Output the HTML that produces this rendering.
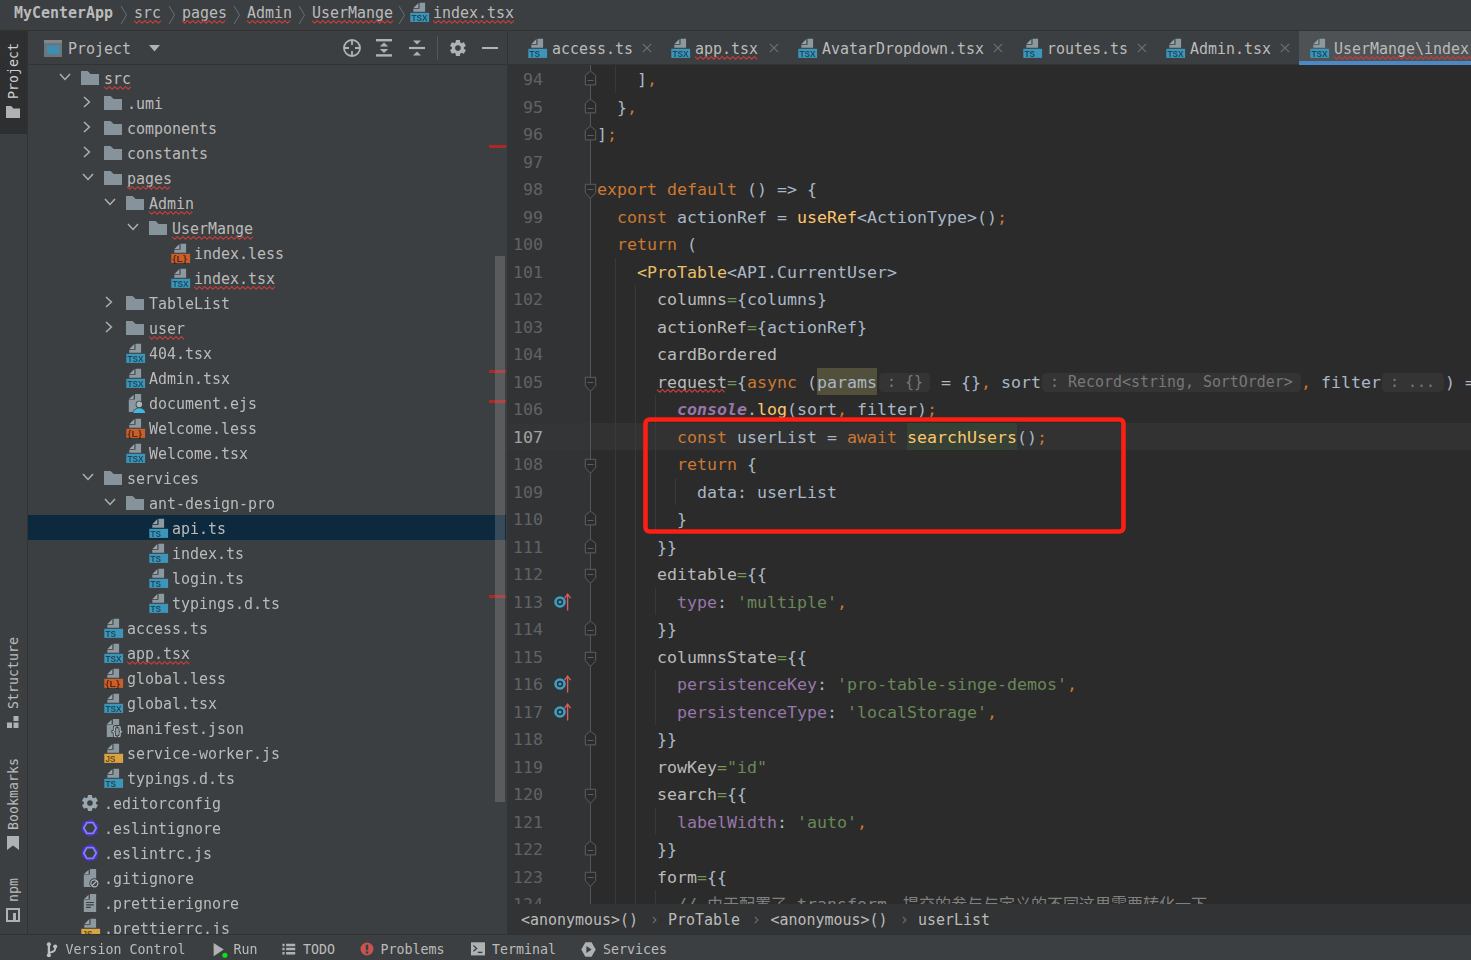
<!DOCTYPE html>
<html><head><meta charset="utf-8"><title>index.tsx</title>
<style>
html,body{margin:0;padding:0}
body{width:1471px;height:960px;overflow:hidden;background:#3c3f41;position:relative;font-family:"DejaVu Sans Mono","Liberation Mono","Noto Sans CJK SC",monospace;color:#bbb}
span,.a,div{position:absolute}
span{white-space:pre}
svg{display:block;overflow:visible}
.k{color:#cc7832}.f{color:#ffc66d}.p{color:#9876aa}.s{color:#6a8759}.t{color:#e8bf6a}.at{color:#bababa}.eq{color:#739558}.c{color:#808080}
.ci{color:#9876aa;font-style:italic;font-weight:bold}
.ln{color:#606366}
.z{font-size:16px}
i,b,u,em{position:static;font-style:normal;font-weight:normal;text-decoration:none}
</style></head><body>

<div style="left:0;top:0;width:1471px;height:30px;background:#3c3f41"></div>
<div style="left:0;top:30px;width:1471px;height:1px;background:#323232"></div>
<span style="left:14px;top:4px;font-size:14.95px;line-height:19px;color:#bbbbbb;transform:scaleY(1.09);transform-origin:0 14px;font-weight:bold">MyCenterApp</span>
<span style="left:134px;top:4px;font-size:14.95px;line-height:19px;color:#bbbbbb;transform:scaleY(1.09);transform-origin:0 14px;">src</span>
<svg class="a" style="left:134px;top:20.0px" width="28" height="4" viewBox="0 0 28 4"><polyline points="0.0,0.6 2.7,3.2 5.4,0.6 8.1,3.2 10.8,0.6 13.5,3.2 16.2,0.6 18.9,3.2 21.6,0.6 24.3,3.2 27.0,0.6" fill="none" stroke="#bc3f3c" stroke-width="1.25"/></svg>
<span style="left:182px;top:4px;font-size:14.95px;line-height:19px;color:#bbbbbb;transform:scaleY(1.09);transform-origin:0 14px;">pages</span>
<svg class="a" style="left:182px;top:20.0px" width="46" height="4" viewBox="0 0 46 4"><polyline points="0.0,0.6 2.7,3.2 5.4,0.6 8.1,3.2 10.8,0.6 13.5,3.2 16.2,0.6 18.9,3.2 21.6,0.6 24.3,3.2 27.0,0.6 29.7,3.2 32.4,0.6 35.1,3.2 37.8,0.6 40.5,3.2 43.2,0.6" fill="none" stroke="#bc3f3c" stroke-width="1.25"/></svg>
<span style="left:247px;top:4px;font-size:14.95px;line-height:19px;color:#bbbbbb;transform:scaleY(1.09);transform-origin:0 14px;">Admin</span>
<svg class="a" style="left:247px;top:20.0px" width="46" height="4" viewBox="0 0 46 4"><polyline points="0.0,0.6 2.7,3.2 5.4,0.6 8.1,3.2 10.8,0.6 13.5,3.2 16.2,0.6 18.9,3.2 21.6,0.6 24.3,3.2 27.0,0.6 29.7,3.2 32.4,0.6 35.1,3.2 37.8,0.6 40.5,3.2 43.2,0.6" fill="none" stroke="#bc3f3c" stroke-width="1.25"/></svg>
<span style="left:312px;top:4px;font-size:14.95px;line-height:19px;color:#bbbbbb;transform:scaleY(1.09);transform-origin:0 14px;">UserMange</span>
<svg class="a" style="left:312px;top:20.0px" width="82" height="4" viewBox="0 0 82 4"><polyline points="0.0,0.6 2.7,3.2 5.4,0.6 8.1,3.2 10.8,0.6 13.5,3.2 16.2,0.6 18.9,3.2 21.6,0.6 24.3,3.2 27.0,0.6 29.7,3.2 32.4,0.6 35.1,3.2 37.8,0.6 40.5,3.2 43.2,0.6 45.9,3.2 48.6,0.6 51.3,3.2 54.0,0.6 56.7,3.2 59.4,0.6 62.1,3.2 64.8,0.6 67.5,3.2 70.2,0.6 72.9,3.2 75.6,0.6 78.3,3.2 81.0,0.6" fill="none" stroke="#bc3f3c" stroke-width="1.25"/></svg>
<span style="left:433px;top:4px;font-size:14.95px;line-height:19px;color:#bbbbbb;transform:scaleY(1.09);transform-origin:0 14px;">index.tsx</span>
<svg class="a" style="left:433px;top:20.0px" width="82" height="4" viewBox="0 0 82 4"><polyline points="0.0,0.6 2.7,3.2 5.4,0.6 8.1,3.2 10.8,0.6 13.5,3.2 16.2,0.6 18.9,3.2 21.6,0.6 24.3,3.2 27.0,0.6 29.7,3.2 32.4,0.6 35.1,3.2 37.8,0.6 40.5,3.2 43.2,0.6 45.9,3.2 48.6,0.6 51.3,3.2 54.0,0.6 56.7,3.2 59.4,0.6 62.1,3.2 64.8,0.6 67.5,3.2 70.2,0.6 72.9,3.2 75.6,0.6 78.3,3.2 81.0,0.6" fill="none" stroke="#bc3f3c" stroke-width="1.25"/></svg>
<svg class="a" style="left:119.5px;top:5px" width="8" height="20" viewBox="0 0 8 20"><path d="M1 1L6.5 10L1 19" fill="none" stroke="#6b6e70" stroke-width="1"/></svg>
<svg class="a" style="left:167.5px;top:5px" width="8" height="20" viewBox="0 0 8 20"><path d="M1 1L6.5 10L1 19" fill="none" stroke="#6b6e70" stroke-width="1"/></svg>
<svg class="a" style="left:232.5px;top:5px" width="8" height="20" viewBox="0 0 8 20"><path d="M1 1L6.5 10L1 19" fill="none" stroke="#6b6e70" stroke-width="1"/></svg>
<svg class="a" style="left:297.5px;top:5px" width="8" height="20" viewBox="0 0 8 20"><path d="M1 1L6.5 10L1 19" fill="none" stroke="#6b6e70" stroke-width="1"/></svg>
<svg class="a" style="left:397.5px;top:5px" width="8" height="20" viewBox="0 0 8 20"><path d="M1 1L6.5 10L1 19" fill="none" stroke="#6b6e70" stroke-width="1"/></svg>
<svg class="a" style="left:409.5px;top:2.1px;will-change:transform" width="20" height="20" viewBox="0 0 20 20"><path d="M9.5 0.7H15.1V9.8H3.3V6.8H9.5Z" fill="#8d99a1"/><path d="M8.4 1.1V5.9H3.5Z" fill="#97a3ab"/><rect x="0.3" y="10.8" width="18.8" height="9.1" fill="#3d96b9"/><text x="1.5" y="18.75" font-family='"Liberation Sans","DejaVu Sans",sans-serif' font-weight="700" font-size="9.8" fill="#0b2a36" fill-opacity=".72" textLength="16.1" lengthAdjust="spacingAndGlyphs">TSX</text></svg>
<div style="left:0;top:31px;width:27px;height:103px;background:#2d2f30"></div>
<div style="left:27px;top:31px;width:1px;height:904px;background:#323232"></div>
<span style="left:4.5px;top:99px;font-size:13.29px;line-height:18px;color:#d0d0d0;transform-origin:0 0;transform:rotate(-90deg);width:56px">Project</span>
<svg class="a" style="left:6px;top:106px" width="14" height="12" viewBox="0 0 14 12"><path d="M0 0H5.2L7.4 2.6H14V12H0Z" fill="#afb1b3"/></svg>
<span style="left:4.5px;top:709px;font-size:13.29px;line-height:18px;color:#bbbbbb;transform-origin:0 0;transform:rotate(-90deg);width:72px">Structure</span>
<svg class="a" style="left:7px;top:716px" width="12" height="12" viewBox="0 0 12 12"><rect x="6.5" y="0" width="5" height="5" fill="#afb1b3"/><rect x="0" y="6.5" width="5" height="5.5" fill="#afb1b3"/><rect x="6.5" y="6.5" width="5" height="5.5" fill="#afb1b3"/></svg>
<span style="left:4.5px;top:830px;font-size:13.29px;line-height:18px;color:#bbbbbb;transform-origin:0 0;transform:rotate(-90deg);width:72px">Bookmarks</span>
<svg class="a" style="left:7px;top:836px" width="12" height="14" viewBox="0 0 12 14"><path d="M0 0H12V14L6 9.5L0 14Z" fill="#afb1b3"/></svg>
<span style="left:4.5px;top:902px;font-size:13.29px;line-height:18px;color:#bbbbbb;transform-origin:0 0;transform:rotate(-90deg);width:24px">npm</span>
<svg class="a" style="left:6px;top:907.5px" width="14" height="14" viewBox="0 0 14 14"><path d="M0 0H14V14H0Z M2 2V12H7V5H10V12H12V2Z" fill="#afb1b3" fill-rule="evenodd"/></svg>
<div style="left:28px;top:64px;width:478px;height:1px;background:#323232"></div>
<svg class="a" style="left:44px;top:40px" width="18" height="17" viewBox="0 0 18 17"><rect x="0" y="0" width="18" height="17" fill="#6d747a"/><rect x="0" y="0" width="18" height="3" fill="#7f868c"/><rect x="3" y="5.5" width="12.5" height="8.5" fill="#3d8fb2"/></svg>
<span style="left:68px;top:40px;font-size:14.95px;line-height:19px;color:#bbbbbb;transform:scaleY(1.09);transform-origin:0 14px;">Project</span>
<svg class="a" style="left:149px;top:45px" width="11" height="7" viewBox="0 0 11 7"><path d="M0 0H11L5.5 6.5Z" fill="#afb1b3"/></svg>
<svg class="a" style="left:342px;top:38px" width="20" height="20" viewBox="0 0 20 20"><circle cx="10" cy="10" r="8" fill="none" stroke="#afb1b3" stroke-width="1.8"/><path d="M10 2V7M10 13V18M2 10H7M13 10H18" stroke="#afb1b3" stroke-width="1.8"/></svg>
<svg class="a" style="left:376px;top:39px" width="16" height="18" viewBox="0 0 16 18"><rect x="0" y="0" width="16" height="2.4" fill="#afb1b3"/><rect x="0" y="15.2" width="16" height="2.4" fill="#afb1b3"/><path d="M8 3.6L12.2 7.6H3.8Z M8 14L12.2 10H3.8Z" fill="#afb1b3"/></svg>
<svg class="a" style="left:409px;top:40px" width="16" height="16" viewBox="0 0 16 16"><rect x="0" y="6.9" width="16" height="2.2" fill="#afb1b3"/><path d="M8 4.6L12 0.6H4Z M8 11.4L12 15.6H4Z" fill="#afb1b3"/></svg>
<div style="left:437px;top:36px;width:1px;height:24px;background:#5a5550"></div>
<svg class="a" style="left:449px;top:39px" width="17" height="17" viewBox="0 0 20 20"><g transform="translate(0.5 0.6)"><path d="M7 4.6L7.7 0.6H12.3L13 4.6Z" transform="rotate(0 10 10)" fill="#afb1b3"/><path d="M7 4.6L7.7 0.6H12.3L13 4.6Z" transform="rotate(60 10 10)" fill="#afb1b3"/><path d="M7 4.6L7.7 0.6H12.3L13 4.6Z" transform="rotate(120 10 10)" fill="#afb1b3"/><path d="M7 4.6L7.7 0.6H12.3L13 4.6Z" transform="rotate(180 10 10)" fill="#afb1b3"/><path d="M7 4.6L7.7 0.6H12.3L13 4.6Z" transform="rotate(240 10 10)" fill="#afb1b3"/><path d="M7 4.6L7.7 0.6H12.3L13 4.6Z" transform="rotate(300 10 10)" fill="#afb1b3"/><circle cx="10" cy="10" r="7.1" fill="#afb1b3"/><circle cx="10" cy="10" r="3.3" fill="#3c3f41"/></g></svg>
<div style="left:482px;top:46.5px;width:16px;height:2.5px;background:#afb1b3"></div>
<div style="left:28px;top:65px;width:478px;height:869px;overflow:hidden">
<svg class="a" style="left:52.8px;top:5.5px" width="18" height="14" viewBox="0 0 18 14"><path d="M0 0H6.6L9.6 3H18V14H0Z" fill="#87939a"/></svg>
<svg class="a" style="left:30.6px;top:8.2px" width="12" height="8" viewBox="0 0 12 8"><path d="M1 1L6 6.4L11 1" fill="none" stroke="#adb0b3" stroke-width="1.5"/></svg>
<span style="left:76px;top:5px;font-size:14.95px;line-height:19px;color:#bbbbbb;transform:scaleY(1.09);transform-origin:0 14px;">src</span>
<svg class="a" style="left:76px;top:20.5px" width="28" height="4" viewBox="0 0 28 4"><polyline points="0.0,0.6 2.7,3.2 5.4,0.6 8.1,3.2 10.8,0.6 13.5,3.2 16.2,0.6 18.9,3.2 21.6,0.6 24.3,3.2 27.0,0.6" fill="none" stroke="#bc3f3c" stroke-width="1.25"/></svg>
<svg class="a" style="left:75.8px;top:30.5px" width="18" height="14" viewBox="0 0 18 14"><path d="M0 0H6.6L9.6 3H18V14H0Z" fill="#87939a"/></svg>
<svg class="a" style="left:55.2px;top:31.2px" width="8" height="12" viewBox="0 0 8 12"><path d="M1 1L6.4 6L1 11" fill="none" stroke="#adb0b3" stroke-width="1.5"/></svg>
<span style="left:99px;top:30px;font-size:14.95px;line-height:19px;color:#bbbbbb;transform:scaleY(1.09);transform-origin:0 14px;">.umi</span>
<svg class="a" style="left:75.8px;top:55.5px" width="18" height="14" viewBox="0 0 18 14"><path d="M0 0H6.6L9.6 3H18V14H0Z" fill="#87939a"/></svg>
<svg class="a" style="left:55.2px;top:56.2px" width="8" height="12" viewBox="0 0 8 12"><path d="M1 1L6.4 6L1 11" fill="none" stroke="#adb0b3" stroke-width="1.5"/></svg>
<span style="left:99px;top:55px;font-size:14.95px;line-height:19px;color:#bbbbbb;transform:scaleY(1.09);transform-origin:0 14px;">components</span>
<svg class="a" style="left:75.8px;top:80.5px" width="18" height="14" viewBox="0 0 18 14"><path d="M0 0H6.6L9.6 3H18V14H0Z" fill="#87939a"/></svg>
<svg class="a" style="left:55.2px;top:81.2px" width="8" height="12" viewBox="0 0 8 12"><path d="M1 1L6.4 6L1 11" fill="none" stroke="#adb0b3" stroke-width="1.5"/></svg>
<span style="left:99px;top:80px;font-size:14.95px;line-height:19px;color:#bbbbbb;transform:scaleY(1.09);transform-origin:0 14px;">constants</span>
<svg class="a" style="left:75.8px;top:105.5px" width="18" height="14" viewBox="0 0 18 14"><path d="M0 0H6.6L9.6 3H18V14H0Z" fill="#87939a"/></svg>
<svg class="a" style="left:53.6px;top:108.2px" width="12" height="8" viewBox="0 0 12 8"><path d="M1 1L6 6.4L11 1" fill="none" stroke="#adb0b3" stroke-width="1.5"/></svg>
<span style="left:99px;top:105px;font-size:14.95px;line-height:19px;color:#bbbbbb;transform:scaleY(1.09);transform-origin:0 14px;">pages</span>
<svg class="a" style="left:99px;top:120.5px" width="46" height="4" viewBox="0 0 46 4"><polyline points="0.0,0.6 2.7,3.2 5.4,0.6 8.1,3.2 10.8,0.6 13.5,3.2 16.2,0.6 18.9,3.2 21.6,0.6 24.3,3.2 27.0,0.6 29.7,3.2 32.4,0.6 35.1,3.2 37.8,0.6 40.5,3.2 43.2,0.6" fill="none" stroke="#bc3f3c" stroke-width="1.25"/></svg>
<svg class="a" style="left:97.8px;top:130.5px" width="18" height="14" viewBox="0 0 18 14"><path d="M0 0H6.6L9.6 3H18V14H0Z" fill="#87939a"/></svg>
<svg class="a" style="left:75.6px;top:133.2px" width="12" height="8" viewBox="0 0 12 8"><path d="M1 1L6 6.4L11 1" fill="none" stroke="#adb0b3" stroke-width="1.5"/></svg>
<span style="left:121px;top:130px;font-size:14.95px;line-height:19px;color:#bbbbbb;transform:scaleY(1.09);transform-origin:0 14px;">Admin</span>
<svg class="a" style="left:121px;top:145.5px" width="46" height="4" viewBox="0 0 46 4"><polyline points="0.0,0.6 2.7,3.2 5.4,0.6 8.1,3.2 10.8,0.6 13.5,3.2 16.2,0.6 18.9,3.2 21.6,0.6 24.3,3.2 27.0,0.6 29.7,3.2 32.4,0.6 35.1,3.2 37.8,0.6 40.5,3.2 43.2,0.6" fill="none" stroke="#bc3f3c" stroke-width="1.25"/></svg>
<svg class="a" style="left:120.8px;top:155.5px" width="18" height="14" viewBox="0 0 18 14"><path d="M0 0H6.6L9.6 3H18V14H0Z" fill="#87939a"/></svg>
<svg class="a" style="left:98.6px;top:158.2px" width="12" height="8" viewBox="0 0 12 8"><path d="M1 1L6 6.4L11 1" fill="none" stroke="#adb0b3" stroke-width="1.5"/></svg>
<span style="left:144px;top:155px;font-size:14.95px;line-height:19px;color:#bbbbbb;transform:scaleY(1.09);transform-origin:0 14px;">UserMange</span>
<svg class="a" style="left:144px;top:170.5px" width="82" height="4" viewBox="0 0 82 4"><polyline points="0.0,0.6 2.7,3.2 5.4,0.6 8.1,3.2 10.8,0.6 13.5,3.2 16.2,0.6 18.9,3.2 21.6,0.6 24.3,3.2 27.0,0.6 29.7,3.2 32.4,0.6 35.1,3.2 37.8,0.6 40.5,3.2 43.2,0.6 45.9,3.2 48.6,0.6 51.3,3.2 54.0,0.6 56.7,3.2 59.4,0.6 62.1,3.2 64.8,0.6 67.5,3.2 70.2,0.6 72.9,3.2 75.6,0.6 78.3,3.2 81.0,0.6" fill="none" stroke="#bc3f3c" stroke-width="1.25"/></svg>
<svg class="a" style="left:142.6px;top:178px;will-change:transform" width="20" height="20" viewBox="0 0 20 20"><path d="M9.5 0.7H15.1V9.8H3.3V6.8H9.5Z" fill="#8d99a1"/><path d="M8.4 1.1V5.9H3.5Z" fill="#97a3ab"/><rect x="0.3" y="10.8" width="18.8" height="9.1" fill="#c8602b"/><text x="1.5" y="18.75" font-family='"Liberation Sans","DejaVu Sans",sans-serif' font-weight="700" font-size="9.4" fill="#3a1204" fill-opacity=".72" textLength="14.5" lengthAdjust="spacingAndGlyphs">{L}</text></svg>
<span style="left:166px;top:180px;font-size:14.95px;line-height:19px;color:#bbbbbb;transform:scaleY(1.09);transform-origin:0 14px;">index.less</span>
<svg class="a" style="left:142.6px;top:203px;will-change:transform" width="20" height="20" viewBox="0 0 20 20"><path d="M9.5 0.7H15.1V9.8H3.3V6.8H9.5Z" fill="#8d99a1"/><path d="M8.4 1.1V5.9H3.5Z" fill="#97a3ab"/><rect x="0.3" y="10.8" width="18.8" height="9.1" fill="#3d96b9"/><text x="1.5" y="18.75" font-family='"Liberation Sans","DejaVu Sans",sans-serif' font-weight="700" font-size="9.8" fill="#0b2a36" fill-opacity=".72" textLength="16.1" lengthAdjust="spacingAndGlyphs">TSX</text></svg>
<span style="left:166px;top:205px;font-size:14.95px;line-height:19px;color:#bbbbbb;transform:scaleY(1.09);transform-origin:0 14px;">index.tsx</span>
<svg class="a" style="left:166px;top:220.5px" width="82" height="4" viewBox="0 0 82 4"><polyline points="0.0,0.6 2.7,3.2 5.4,0.6 8.1,3.2 10.8,0.6 13.5,3.2 16.2,0.6 18.9,3.2 21.6,0.6 24.3,3.2 27.0,0.6 29.7,3.2 32.4,0.6 35.1,3.2 37.8,0.6 40.5,3.2 43.2,0.6 45.9,3.2 48.6,0.6 51.3,3.2 54.0,0.6 56.7,3.2 59.4,0.6 62.1,3.2 64.8,0.6 67.5,3.2 70.2,0.6 72.9,3.2 75.6,0.6 78.3,3.2 81.0,0.6" fill="none" stroke="#bc3f3c" stroke-width="1.25"/></svg>
<svg class="a" style="left:97.8px;top:230.5px" width="18" height="14" viewBox="0 0 18 14"><path d="M0 0H6.6L9.6 3H18V14H0Z" fill="#87939a"/></svg>
<svg class="a" style="left:77.2px;top:231.2px" width="8" height="12" viewBox="0 0 8 12"><path d="M1 1L6.4 6L1 11" fill="none" stroke="#adb0b3" stroke-width="1.5"/></svg>
<span style="left:121px;top:230px;font-size:14.95px;line-height:19px;color:#bbbbbb;transform:scaleY(1.09);transform-origin:0 14px;">TableList</span>
<svg class="a" style="left:97.8px;top:255.5px" width="18" height="14" viewBox="0 0 18 14"><path d="M0 0H6.6L9.6 3H18V14H0Z" fill="#87939a"/></svg>
<svg class="a" style="left:77.2px;top:256.2px" width="8" height="12" viewBox="0 0 8 12"><path d="M1 1L6.4 6L1 11" fill="none" stroke="#adb0b3" stroke-width="1.5"/></svg>
<span style="left:121px;top:255px;font-size:14.95px;line-height:19px;color:#bbbbbb;transform:scaleY(1.09);transform-origin:0 14px;">user</span>
<svg class="a" style="left:121px;top:270.5px" width="37" height="4" viewBox="0 0 37 4"><polyline points="0.0,0.6 2.7,3.2 5.4,0.6 8.1,3.2 10.8,0.6 13.5,3.2 16.2,0.6 18.9,3.2 21.6,0.6 24.3,3.2 27.0,0.6 29.7,3.2 32.4,0.6 35.1,3.2" fill="none" stroke="#bc3f3c" stroke-width="1.25"/></svg>
<svg class="a" style="left:97.6px;top:278px;will-change:transform" width="20" height="20" viewBox="0 0 20 20"><path d="M9.5 0.7H15.1V9.8H3.3V6.8H9.5Z" fill="#8d99a1"/><path d="M8.4 1.1V5.9H3.5Z" fill="#97a3ab"/><rect x="0.3" y="10.8" width="18.8" height="9.1" fill="#3d96b9"/><text x="1.5" y="18.75" font-family='"Liberation Sans","DejaVu Sans",sans-serif' font-weight="700" font-size="9.8" fill="#0b2a36" fill-opacity=".72" textLength="16.1" lengthAdjust="spacingAndGlyphs">TSX</text></svg>
<span style="left:121px;top:280px;font-size:14.95px;line-height:19px;color:#bbbbbb;transform:scaleY(1.09);transform-origin:0 14px;">404.tsx</span>
<svg class="a" style="left:97.6px;top:303px;will-change:transform" width="20" height="20" viewBox="0 0 20 20"><path d="M9.5 0.7H15.1V9.8H3.3V6.8H9.5Z" fill="#8d99a1"/><path d="M8.4 1.1V5.9H3.5Z" fill="#97a3ab"/><rect x="0.3" y="10.8" width="18.8" height="9.1" fill="#3d96b9"/><text x="1.5" y="18.75" font-family='"Liberation Sans","DejaVu Sans",sans-serif' font-weight="700" font-size="9.8" fill="#0b2a36" fill-opacity=".72" textLength="16.1" lengthAdjust="spacingAndGlyphs">TSX</text></svg>
<span style="left:121px;top:305px;font-size:14.95px;line-height:19px;color:#bbbbbb;transform:scaleY(1.09);transform-origin:0 14px;">Admin.tsx</span>
<svg class="a" style="left:98.1px;top:328px;will-change:transform" width="22" height="22" viewBox="0 0 22 22"><path d="M8.9 1H15.15V18.9H2.8V6.4H8.9Z" fill="#8d99a1"/><path d="M7.65 1.7V6H3.1Z" fill="#97a3ab"/><circle cx="13.3" cy="11.4" r="3.7" fill="#3c3f41"/><circle cx="13.3" cy="11.4" r="2.8" fill="#aab5bc"/><path d="M6.4 20.9A6.85 6.3 0 0 1 20.1 20.9Z" fill="#3c3f41"/><path d="M7.3 20.1A5.95 4.8 0 0 1 19.2 20.1Z" fill="#40b6e0"/></svg>
<span style="left:121px;top:330px;font-size:14.95px;line-height:19px;color:#bbbbbb;transform:scaleY(1.09);transform-origin:0 14px;">document.ejs</span>
<svg class="a" style="left:97.6px;top:353px;will-change:transform" width="20" height="20" viewBox="0 0 20 20"><path d="M9.5 0.7H15.1V9.8H3.3V6.8H9.5Z" fill="#8d99a1"/><path d="M8.4 1.1V5.9H3.5Z" fill="#97a3ab"/><rect x="0.3" y="10.8" width="18.8" height="9.1" fill="#c8602b"/><text x="1.5" y="18.75" font-family='"Liberation Sans","DejaVu Sans",sans-serif' font-weight="700" font-size="9.4" fill="#3a1204" fill-opacity=".72" textLength="14.5" lengthAdjust="spacingAndGlyphs">{L}</text></svg>
<span style="left:121px;top:355px;font-size:14.95px;line-height:19px;color:#bbbbbb;transform:scaleY(1.09);transform-origin:0 14px;">Welcome.less</span>
<svg class="a" style="left:97.6px;top:378px;will-change:transform" width="20" height="20" viewBox="0 0 20 20"><path d="M9.5 0.7H15.1V9.8H3.3V6.8H9.5Z" fill="#8d99a1"/><path d="M8.4 1.1V5.9H3.5Z" fill="#97a3ab"/><rect x="0.3" y="10.8" width="18.8" height="9.1" fill="#3d96b9"/><text x="1.5" y="18.75" font-family='"Liberation Sans","DejaVu Sans",sans-serif' font-weight="700" font-size="9.8" fill="#0b2a36" fill-opacity=".72" textLength="16.1" lengthAdjust="spacingAndGlyphs">TSX</text></svg>
<span style="left:121px;top:380px;font-size:14.95px;line-height:19px;color:#bbbbbb;transform:scaleY(1.09);transform-origin:0 14px;">Welcome.tsx</span>
<svg class="a" style="left:75.8px;top:405.5px" width="18" height="14" viewBox="0 0 18 14"><path d="M0 0H6.6L9.6 3H18V14H0Z" fill="#87939a"/></svg>
<svg class="a" style="left:53.6px;top:408.2px" width="12" height="8" viewBox="0 0 12 8"><path d="M1 1L6 6.4L11 1" fill="none" stroke="#adb0b3" stroke-width="1.5"/></svg>
<span style="left:99px;top:405px;font-size:14.95px;line-height:19px;color:#bbbbbb;transform:scaleY(1.09);transform-origin:0 14px;">services</span>
<svg class="a" style="left:97.8px;top:430.5px" width="18" height="14" viewBox="0 0 18 14"><path d="M0 0H6.6L9.6 3H18V14H0Z" fill="#87939a"/></svg>
<svg class="a" style="left:75.6px;top:433.2px" width="12" height="8" viewBox="0 0 12 8"><path d="M1 1L6 6.4L11 1" fill="none" stroke="#adb0b3" stroke-width="1.5"/></svg>
<span style="left:121px;top:430px;font-size:14.95px;line-height:19px;color:#bbbbbb;transform:scaleY(1.09);transform-origin:0 14px;">ant-design-pro</span>
<div style="left:0;top:450px;width:478px;height:25px;background:#0d293e"></div>
<svg class="a" style="left:120.6px;top:453px;will-change:transform" width="20" height="20" viewBox="0 0 20 20"><path d="M9.5 0.7H15.1V9.8H3.3V6.8H9.5Z" fill="#8d99a1"/><path d="M8.4 1.1V5.9H3.5Z" fill="#97a3ab"/><rect x="0.3" y="10.8" width="18.8" height="9.1" fill="#3d96b9"/><text x="1.5" y="18.75" font-family='"Liberation Sans","DejaVu Sans",sans-serif' font-weight="700" font-size="9.8" fill="#0b2a36" fill-opacity=".72" textLength="10.5" lengthAdjust="spacingAndGlyphs">TS</text></svg>
<span style="left:144px;top:455px;font-size:14.95px;line-height:19px;color:#bbbbbb;transform:scaleY(1.09);transform-origin:0 14px;">api.ts</span>
<svg class="a" style="left:120.6px;top:478px;will-change:transform" width="20" height="20" viewBox="0 0 20 20"><path d="M9.5 0.7H15.1V9.8H3.3V6.8H9.5Z" fill="#8d99a1"/><path d="M8.4 1.1V5.9H3.5Z" fill="#97a3ab"/><rect x="0.3" y="10.8" width="18.8" height="9.1" fill="#3d96b9"/><text x="1.5" y="18.75" font-family='"Liberation Sans","DejaVu Sans",sans-serif' font-weight="700" font-size="9.8" fill="#0b2a36" fill-opacity=".72" textLength="10.5" lengthAdjust="spacingAndGlyphs">TS</text></svg>
<span style="left:144px;top:480px;font-size:14.95px;line-height:19px;color:#bbbbbb;transform:scaleY(1.09);transform-origin:0 14px;">index.ts</span>
<svg class="a" style="left:120.6px;top:503px;will-change:transform" width="20" height="20" viewBox="0 0 20 20"><path d="M9.5 0.7H15.1V9.8H3.3V6.8H9.5Z" fill="#8d99a1"/><path d="M8.4 1.1V5.9H3.5Z" fill="#97a3ab"/><rect x="0.3" y="10.8" width="18.8" height="9.1" fill="#3d96b9"/><text x="1.5" y="18.75" font-family='"Liberation Sans","DejaVu Sans",sans-serif' font-weight="700" font-size="9.8" fill="#0b2a36" fill-opacity=".72" textLength="10.5" lengthAdjust="spacingAndGlyphs">TS</text></svg>
<span style="left:144px;top:505px;font-size:14.95px;line-height:19px;color:#bbbbbb;transform:scaleY(1.09);transform-origin:0 14px;">login.ts</span>
<svg class="a" style="left:120.6px;top:528px;will-change:transform" width="20" height="20" viewBox="0 0 20 20"><path d="M9.5 0.7H15.1V9.8H3.3V6.8H9.5Z" fill="#8d99a1"/><path d="M8.4 1.1V5.9H3.5Z" fill="#97a3ab"/><rect x="0.3" y="10.8" width="18.8" height="9.1" fill="#3d96b9"/><text x="1.5" y="18.75" font-family='"Liberation Sans","DejaVu Sans",sans-serif' font-weight="700" font-size="9.8" fill="#0b2a36" fill-opacity=".72" textLength="10.5" lengthAdjust="spacingAndGlyphs">TS</text></svg>
<span style="left:144px;top:530px;font-size:14.95px;line-height:19px;color:#bbbbbb;transform:scaleY(1.09);transform-origin:0 14px;">typings.d.ts</span>
<svg class="a" style="left:75.6px;top:553px;will-change:transform" width="20" height="20" viewBox="0 0 20 20"><path d="M9.5 0.7H15.1V9.8H3.3V6.8H9.5Z" fill="#8d99a1"/><path d="M8.4 1.1V5.9H3.5Z" fill="#97a3ab"/><rect x="0.3" y="10.8" width="18.8" height="9.1" fill="#3d96b9"/><text x="1.5" y="18.75" font-family='"Liberation Sans","DejaVu Sans",sans-serif' font-weight="700" font-size="9.8" fill="#0b2a36" fill-opacity=".72" textLength="10.5" lengthAdjust="spacingAndGlyphs">TS</text></svg>
<span style="left:99px;top:555px;font-size:14.95px;line-height:19px;color:#bbbbbb;transform:scaleY(1.09);transform-origin:0 14px;">access.ts</span>
<svg class="a" style="left:75.6px;top:578px;will-change:transform" width="20" height="20" viewBox="0 0 20 20"><path d="M9.5 0.7H15.1V9.8H3.3V6.8H9.5Z" fill="#8d99a1"/><path d="M8.4 1.1V5.9H3.5Z" fill="#97a3ab"/><rect x="0.3" y="10.8" width="18.8" height="9.1" fill="#3d96b9"/><text x="1.5" y="18.75" font-family='"Liberation Sans","DejaVu Sans",sans-serif' font-weight="700" font-size="9.8" fill="#0b2a36" fill-opacity=".72" textLength="16.1" lengthAdjust="spacingAndGlyphs">TSX</text></svg>
<span style="left:99px;top:580px;font-size:14.95px;line-height:19px;color:#bbbbbb;transform:scaleY(1.09);transform-origin:0 14px;">app.tsx</span>
<svg class="a" style="left:99px;top:595.5px" width="64" height="4" viewBox="0 0 64 4"><polyline points="0.0,0.6 2.7,3.2 5.4,0.6 8.1,3.2 10.8,0.6 13.5,3.2 16.2,0.6 18.9,3.2 21.6,0.6 24.3,3.2 27.0,0.6 29.7,3.2 32.4,0.6 35.1,3.2 37.8,0.6 40.5,3.2 43.2,0.6 45.9,3.2 48.6,0.6 51.3,3.2 54.0,0.6 56.7,3.2 59.4,0.6 62.1,3.2" fill="none" stroke="#bc3f3c" stroke-width="1.25"/></svg>
<svg class="a" style="left:75.6px;top:603px;will-change:transform" width="20" height="20" viewBox="0 0 20 20"><path d="M9.5 0.7H15.1V9.8H3.3V6.8H9.5Z" fill="#8d99a1"/><path d="M8.4 1.1V5.9H3.5Z" fill="#97a3ab"/><rect x="0.3" y="10.8" width="18.8" height="9.1" fill="#c8602b"/><text x="1.5" y="18.75" font-family='"Liberation Sans","DejaVu Sans",sans-serif' font-weight="700" font-size="9.4" fill="#3a1204" fill-opacity=".72" textLength="14.5" lengthAdjust="spacingAndGlyphs">{L}</text></svg>
<span style="left:99px;top:605px;font-size:14.95px;line-height:19px;color:#bbbbbb;transform:scaleY(1.09);transform-origin:0 14px;">global.less</span>
<svg class="a" style="left:75.6px;top:628px;will-change:transform" width="20" height="20" viewBox="0 0 20 20"><path d="M9.5 0.7H15.1V9.8H3.3V6.8H9.5Z" fill="#8d99a1"/><path d="M8.4 1.1V5.9H3.5Z" fill="#97a3ab"/><rect x="0.3" y="10.8" width="18.8" height="9.1" fill="#3d96b9"/><text x="1.5" y="18.75" font-family='"Liberation Sans","DejaVu Sans",sans-serif' font-weight="700" font-size="9.8" fill="#0b2a36" fill-opacity=".72" textLength="16.1" lengthAdjust="spacingAndGlyphs">TSX</text></svg>
<span style="left:99px;top:630px;font-size:14.95px;line-height:19px;color:#bbbbbb;transform:scaleY(1.09);transform-origin:0 14px;">global.tsx</span>
<svg class="a" style="left:76.1px;top:653px;will-change:transform" width="22" height="22" viewBox="0 0 22 22"><path d="M8.9 1H15.15V18.9H2.8V6.4H8.9Z" fill="#8d99a1"/><path d="M7.65 1.7V6H3.1Z" fill="#97a3ab"/><text x="13.3" y="18.2" text-anchor="middle" font-family='"DejaVu Sans Mono","Liberation Mono",monospace' font-size="12.5" font-weight="700" fill="#aab5bc" stroke="#3c3f41" stroke-width="2.2" paint-order="stroke" textLength="11.6" lengthAdjust="spacingAndGlyphs">{}</text><ellipse cx="13.3" cy="14.3" rx="1" ry="3.3" fill="#8d99a1"/></svg>
<span style="left:99px;top:655px;font-size:14.95px;line-height:19px;color:#bbbbbb;transform:scaleY(1.09);transform-origin:0 14px;">manifest.json</span>
<svg class="a" style="left:75.6px;top:678px;will-change:transform" width="20" height="20" viewBox="0 0 20 20"><path d="M9.5 0.7H15.1V9.8H3.3V6.8H9.5Z" fill="#8d99a1"/><path d="M8.4 1.1V5.9H3.5Z" fill="#97a3ab"/><rect x="0.3" y="10.8" width="18.8" height="9.1" fill="#d9a343"/><text x="1.5" y="18.75" font-family='"Liberation Sans","DejaVu Sans",sans-serif' font-weight="700" font-size="9.8" fill="#3a2604" fill-opacity=".72" textLength="10" lengthAdjust="spacingAndGlyphs">JS</text></svg>
<span style="left:99px;top:680px;font-size:14.95px;line-height:19px;color:#bbbbbb;transform:scaleY(1.09);transform-origin:0 14px;">service-worker.js</span>
<svg class="a" style="left:75.6px;top:703px;will-change:transform" width="20" height="20" viewBox="0 0 20 20"><path d="M9.5 0.7H15.1V9.8H3.3V6.8H9.5Z" fill="#8d99a1"/><path d="M8.4 1.1V5.9H3.5Z" fill="#97a3ab"/><rect x="0.3" y="10.8" width="18.8" height="9.1" fill="#3d96b9"/><text x="1.5" y="18.75" font-family='"Liberation Sans","DejaVu Sans",sans-serif' font-weight="700" font-size="9.8" fill="#0b2a36" fill-opacity=".72" textLength="10.5" lengthAdjust="spacingAndGlyphs">TS</text></svg>
<span style="left:99px;top:705px;font-size:14.95px;line-height:19px;color:#bbbbbb;transform:scaleY(1.09);transform-origin:0 14px;">typings.d.ts</span>
<svg class="a" style="left:53px;top:729px" width="17" height="17" viewBox="0 0 20 20"><g transform="translate(0.5 0.6)"><path d="M7 4.6L7.7 0.6H12.3L13 4.6Z" transform="rotate(0 10 10)" fill="#9aa7b0"/><path d="M7 4.6L7.7 0.6H12.3L13 4.6Z" transform="rotate(60 10 10)" fill="#9aa7b0"/><path d="M7 4.6L7.7 0.6H12.3L13 4.6Z" transform="rotate(120 10 10)" fill="#9aa7b0"/><path d="M7 4.6L7.7 0.6H12.3L13 4.6Z" transform="rotate(180 10 10)" fill="#9aa7b0"/><path d="M7 4.6L7.7 0.6H12.3L13 4.6Z" transform="rotate(240 10 10)" fill="#9aa7b0"/><path d="M7 4.6L7.7 0.6H12.3L13 4.6Z" transform="rotate(300 10 10)" fill="#9aa7b0"/><circle cx="10" cy="10" r="7.1" fill="#9aa7b0"/><circle cx="10" cy="10" r="3.3" fill="#3c3f41"/></g></svg>
<span style="left:76px;top:730px;font-size:14.95px;line-height:19px;color:#bbbbbb;transform:scaleY(1.09);transform-origin:0 14px;">.editorconfig</span>
<svg class="a" style="left:52px;top:753.1px" width="20" height="20" viewBox="0 0 20 20"><polygon points="11.41,1.11 18.40,6.77 16.99,15.66 8.59,18.89 1.60,13.23 3.01,4.34" fill="#4b32c3"/><polygon points="17.30,10.00 13.65,16.32 6.35,16.32 2.70,10.00 6.35,3.68 13.65,3.68" fill="#8080f2"/><polygon points="15.10,10.00 12.55,14.42 7.45,14.42 4.90,10.00 7.45,5.58 12.55,5.58" fill="#3c3f41"/></svg>
<span style="left:76px;top:755px;font-size:14.95px;line-height:19px;color:#bbbbbb;transform:scaleY(1.09);transform-origin:0 14px;">.eslintignore</span>
<svg class="a" style="left:52px;top:778.1px" width="20" height="20" viewBox="0 0 20 20"><polygon points="11.41,1.11 18.40,6.77 16.99,15.66 8.59,18.89 1.60,13.23 3.01,4.34" fill="#4b32c3"/><polygon points="17.30,10.00 13.65,16.32 6.35,16.32 2.70,10.00 6.35,3.68 13.65,3.68" fill="#8080f2"/><polygon points="15.10,10.00 12.55,14.42 7.45,14.42 4.90,10.00 7.45,5.58 12.55,5.58" fill="#3c3f41"/></svg>
<span style="left:76px;top:780px;font-size:14.95px;line-height:19px;color:#bbbbbb;transform:scaleY(1.09);transform-origin:0 14px;">.eslintrc.js</span>
<svg class="a" style="left:53.1px;top:803px;will-change:transform" width="22" height="22" viewBox="0 0 22 22"><path d="M8.9 1H15.15V18.9H2.8V6.4H8.9Z" fill="#8d99a1"/><path d="M7.65 1.7V6H3.1Z" fill="#97a3ab"/><circle cx="13.4" cy="15.3" r="5" fill="#3c3f41"/><circle cx="13.4" cy="15.3" r="3.5" fill="none" stroke="#aab5bc" stroke-width="1.25"/><path d="M11 17.7L15.8 12.9" stroke="#aab5bc" stroke-width="1.25"/></svg>
<span style="left:76px;top:805px;font-size:14.95px;line-height:19px;color:#bbbbbb;transform:scaleY(1.09);transform-origin:0 14px;">.gitignore</span>
<svg class="a" style="left:53.1px;top:828px;will-change:transform" width="22" height="22" viewBox="0 0 22 22"><path d="M8.9 1H15.15V18.9H2.8V6.4H8.9Z" fill="#8d99a1"/><path d="M7.65 1.7V6H3.1Z" fill="#97a3ab"/><path d="M5.1 9.5H12.8M5.1 11.9H12.8M5.1 14.4H9.9" stroke="#3c3f41" stroke-width="1.1"/></svg>
<span style="left:76px;top:830px;font-size:14.95px;line-height:19px;color:#bbbbbb;transform:scaleY(1.09);transform-origin:0 14px;">.prettierignore</span>
<svg class="a" style="left:52.6px;top:853px;will-change:transform" width="20" height="20" viewBox="0 0 20 20"><path d="M9.5 0.7H15.1V9.8H3.3V6.8H9.5Z" fill="#8d99a1"/><path d="M8.4 1.1V5.9H3.5Z" fill="#97a3ab"/><rect x="0.3" y="10.8" width="18.8" height="9.1" fill="#d9a343"/><text x="1.5" y="18.75" font-family='"Liberation Sans","DejaVu Sans",sans-serif' font-weight="700" font-size="9.8" fill="#3a2604" fill-opacity=".72" textLength="10" lengthAdjust="spacingAndGlyphs">JS</text></svg>
<span style="left:76px;top:855px;font-size:14.95px;line-height:19px;color:#bbbbbb;transform:scaleY(1.09);transform-origin:0 14px;">.prettierrc.js</span>
<div style="left:461px;top:80px;width:17px;height:2.6px;background:#ac2824"></div>
<div style="left:461px;top:305px;width:17px;height:2.6px;background:#ac2824"></div>
<div style="left:461px;top:335px;width:17px;height:2.6px;background:#ac2824"></div>
<div style="left:461px;top:530px;width:17px;height:2.6px;background:#ac2824"></div>
<div style="left:467px;top:191px;width:10px;height:546px;background:rgba(166,166,166,.28)"></div>
</div>
<div style="left:507px;top:30px;width:1px;height:35px;background:#323232"></div>
<div style="left:506px;top:30px;width:1px;height:1px;background:#3c3f41"></div>
<div style="left:508px;top:31px;width:963px;height:34px;background:#3c3f41"></div>
<div style="left:508px;top:64px;width:963px;height:1px;background:#323232"></div>
<div style="left:1299px;top:31px;width:172px;height:34px;background:#4e5254"></div>
<div style="left:1299px;top:61px;width:172px;height:4px;background:#4a88c7"></div>
<svg class="a" style="left:527.7px;top:38px;will-change:transform" width="20" height="20" viewBox="0 0 20 20"><path d="M9.5 0.7H15.1V9.8H3.3V6.8H9.5Z" fill="#8d99a1"/><path d="M8.4 1.1V5.9H3.5Z" fill="#97a3ab"/><rect x="0.3" y="10.8" width="18.8" height="9.1" fill="#3d96b9"/><text x="1.5" y="18.75" font-family='"Liberation Sans","DejaVu Sans",sans-serif' font-weight="700" font-size="9.8" fill="#0b2a36" fill-opacity=".72" textLength="10.5" lengthAdjust="spacingAndGlyphs">TS</text></svg>
<span style="left:552px;top:40px;font-size:14.95px;line-height:19px;color:#bbbbbb;transform:scaleY(1.09);transform-origin:0 14px;">access.ts</span>
<svg class="a" style="left:642.0px;top:43px" width="10" height="10" viewBox="0 0 10 10"><path d="M0.8 0.8L9.2 9.2M9.2 0.8L0.8 9.2" stroke="#6e7274" stroke-width="1.1"/></svg>
<svg class="a" style="left:670.7px;top:38px;will-change:transform" width="20" height="20" viewBox="0 0 20 20"><path d="M9.5 0.7H15.1V9.8H3.3V6.8H9.5Z" fill="#8d99a1"/><path d="M8.4 1.1V5.9H3.5Z" fill="#97a3ab"/><rect x="0.3" y="10.8" width="18.8" height="9.1" fill="#3d96b9"/><text x="1.5" y="18.75" font-family='"Liberation Sans","DejaVu Sans",sans-serif' font-weight="700" font-size="9.8" fill="#0b2a36" fill-opacity=".72" textLength="16.1" lengthAdjust="spacingAndGlyphs">TSX</text></svg>
<span style="left:695px;top:40px;font-size:14.95px;line-height:19px;color:#bbbbbb;transform:scaleY(1.09);transform-origin:0 14px;">app.tsx</span>
<svg class="a" style="left:695px;top:56.0px" width="64" height="4" viewBox="0 0 64 4"><polyline points="0.0,0.6 2.7,3.2 5.4,0.6 8.1,3.2 10.8,0.6 13.5,3.2 16.2,0.6 18.9,3.2 21.6,0.6 24.3,3.2 27.0,0.6 29.7,3.2 32.4,0.6 35.1,3.2 37.8,0.6 40.5,3.2 43.2,0.6 45.9,3.2 48.6,0.6 51.3,3.2 54.0,0.6 56.7,3.2 59.4,0.6 62.1,3.2" fill="none" stroke="#bc3f3c" stroke-width="1.25"/></svg>
<svg class="a" style="left:768.5px;top:43px" width="10" height="10" viewBox="0 0 10 10"><path d="M0.8 0.8L9.2 9.2M9.2 0.8L0.8 9.2" stroke="#6e7274" stroke-width="1.1"/></svg>
<svg class="a" style="left:797.7px;top:38px;will-change:transform" width="20" height="20" viewBox="0 0 20 20"><path d="M9.5 0.7H15.1V9.8H3.3V6.8H9.5Z" fill="#8d99a1"/><path d="M8.4 1.1V5.9H3.5Z" fill="#97a3ab"/><rect x="0.3" y="10.8" width="18.8" height="9.1" fill="#3d96b9"/><text x="1.5" y="18.75" font-family='"Liberation Sans","DejaVu Sans",sans-serif' font-weight="700" font-size="9.8" fill="#0b2a36" fill-opacity=".72" textLength="16.1" lengthAdjust="spacingAndGlyphs">TSX</text></svg>
<span style="left:822px;top:40px;font-size:14.95px;line-height:19px;color:#bbbbbb;transform:scaleY(1.09);transform-origin:0 14px;">AvatarDropdown.tsx</span>
<svg class="a" style="left:993.0px;top:43px" width="10" height="10" viewBox="0 0 10 10"><path d="M0.8 0.8L9.2 9.2M9.2 0.8L0.8 9.2" stroke="#6e7274" stroke-width="1.1"/></svg>
<svg class="a" style="left:1022.7px;top:38px;will-change:transform" width="20" height="20" viewBox="0 0 20 20"><path d="M9.5 0.7H15.1V9.8H3.3V6.8H9.5Z" fill="#8d99a1"/><path d="M8.4 1.1V5.9H3.5Z" fill="#97a3ab"/><rect x="0.3" y="10.8" width="18.8" height="9.1" fill="#3d96b9"/><text x="1.5" y="18.75" font-family='"Liberation Sans","DejaVu Sans",sans-serif' font-weight="700" font-size="9.8" fill="#0b2a36" fill-opacity=".72" textLength="10.5" lengthAdjust="spacingAndGlyphs">TS</text></svg>
<span style="left:1047px;top:40px;font-size:14.95px;line-height:19px;color:#bbbbbb;transform:scaleY(1.09);transform-origin:0 14px;">routes.ts</span>
<svg class="a" style="left:1137.0px;top:43px" width="10" height="10" viewBox="0 0 10 10"><path d="M0.8 0.8L9.2 9.2M9.2 0.8L0.8 9.2" stroke="#6e7274" stroke-width="1.1"/></svg>
<svg class="a" style="left:1165.7px;top:38px;will-change:transform" width="20" height="20" viewBox="0 0 20 20"><path d="M9.5 0.7H15.1V9.8H3.3V6.8H9.5Z" fill="#8d99a1"/><path d="M8.4 1.1V5.9H3.5Z" fill="#97a3ab"/><rect x="0.3" y="10.8" width="18.8" height="9.1" fill="#3d96b9"/><text x="1.5" y="18.75" font-family='"Liberation Sans","DejaVu Sans",sans-serif' font-weight="700" font-size="9.8" fill="#0b2a36" fill-opacity=".72" textLength="16.1" lengthAdjust="spacingAndGlyphs">TSX</text></svg>
<span style="left:1190px;top:40px;font-size:14.95px;line-height:19px;color:#bbbbbb;transform:scaleY(1.09);transform-origin:0 14px;">Admin.tsx</span>
<svg class="a" style="left:1280.0px;top:43px" width="10" height="10" viewBox="0 0 10 10"><path d="M0.8 0.8L9.2 9.2M9.2 0.8L0.8 9.2" stroke="#6e7274" stroke-width="1.1"/></svg>
<svg class="a" style="left:1309.7px;top:38px;will-change:transform" width="20" height="20" viewBox="0 0 20 20"><path d="M9.5 0.7H15.1V9.8H3.3V6.8H9.5Z" fill="#8d99a1"/><path d="M8.4 1.1V5.9H3.5Z" fill="#97a3ab"/><rect x="0.3" y="10.8" width="18.8" height="9.1" fill="#3d96b9"/><text x="1.5" y="18.75" font-family='"Liberation Sans","DejaVu Sans",sans-serif' font-weight="700" font-size="9.8" fill="#0b2a36" fill-opacity=".72" textLength="16.1" lengthAdjust="spacingAndGlyphs">TSX</text></svg>
<span style="left:1334px;top:40px;font-size:14.95px;line-height:19px;color:#bbbbbb;transform:scaleY(1.09);transform-origin:0 14px;">UserMange\index.tsx</span>
<svg class="a" style="left:1334px;top:56.0px" width="142" height="4" viewBox="0 0 142 4"><polyline points="0.0,0.6 2.7,3.2 5.4,0.6 8.1,3.2 10.8,0.6 13.5,3.2 16.2,0.6 18.9,3.2 21.6,0.6 24.3,3.2 27.0,0.6 29.7,3.2 32.4,0.6 35.1,3.2 37.8,0.6 40.5,3.2 43.2,0.6 45.9,3.2 48.6,0.6 51.3,3.2 54.0,0.6 56.7,3.2 59.4,0.6 62.1,3.2 64.8,0.6 67.5,3.2 70.2,0.6 72.9,3.2 75.6,0.6 78.3,3.2 81.0,0.6 83.7,3.2 86.4,0.6 89.1,3.2 91.8,0.6 94.5,3.2 97.2,0.6 99.9,3.2 102.6,0.6 105.3,3.2 108.0,0.6 110.7,3.2 113.4,0.6 116.1,3.2 118.8,0.6 121.5,3.2 124.2,0.6 126.9,3.2 129.6,0.6 132.3,3.2 135.0,0.6 137.7,3.2 140.4,0.6" fill="none" stroke="#bc3f3c" stroke-width="1.25"/></svg>
<div style="left:507px;top:65px;width:964px;height:839px;background:#2b2b2b;overflow:hidden">
<div style="left:0;top:0;width:83px;height:839px;background:#313335"></div>
<div style="left:0;top:358px;width:83px;height:27px;background:#333537"></div>
<div style="left:84px;top:358px;width:880px;height:27px;background:#323232"></div>
<div style="left:83px;top:0;width:1px;height:839px;background:#555555"></div>
<div style="left:108px;top:0.0px;width:1px;height:28.0px;background:#393939"></div>
<div style="left:108px;top:193.0px;width:1px;height:687.0px;background:#393939"></div>
<div style="left:128px;top:220.0px;width:1px;height:660.0px;background:#393939"></div>
<div style="left:148px;top:330.0px;width:1px;height:138.0px;background:#393939"></div>
<div style="left:148px;top:523.0px;width:1px;height:27.0px;background:#393939"></div>
<div style="left:148px;top:605.0px;width:1px;height:55.0px;background:#393939"></div>
<div style="left:148px;top:743.0px;width:1px;height:27.0px;background:#393939"></div>
<div style="left:148px;top:825.0px;width:1px;height:28.0px;background:#393939"></div>
<div style="left:168px;top:413.0px;width:1px;height:27.0px;background:#393939"></div>
<div style="left:310px;top:303px;width:60px;height:27px;background:#52503a"></div>
<div style="left:400px;top:358px;width:110px;height:27px;background:#344134"></div>
<span style="left:16px;top:4px;font-size:16.61px;line-height:22px;color:#606366;">94</span>
<span style="left:90px;top:4px;font-size:16.61px;line-height:22px;color:#a9b7c6;">    ]<i class="k">,</i></span>
<span style="left:16px;top:32px;font-size:16.61px;line-height:22px;color:#606366;">95</span>
<span style="left:90px;top:32px;font-size:16.61px;line-height:22px;color:#a9b7c6;">  }<i class="k">,</i></span>
<span style="left:16px;top:59px;font-size:16.61px;line-height:22px;color:#606366;">96</span>
<span style="left:90px;top:59px;font-size:16.61px;line-height:22px;color:#a9b7c6;">]<i class="k">;</i></span>
<span style="left:16px;top:87px;font-size:16.61px;line-height:22px;color:#606366;">97</span>
<span style="left:16px;top:114px;font-size:16.61px;line-height:22px;color:#606366;">98</span>
<span style="left:90px;top:114px;font-size:16.61px;line-height:22px;color:#a9b7c6;"><i class="k">export default</i> () =&gt; {</span>
<span style="left:16px;top:142px;font-size:16.61px;line-height:22px;color:#606366;">99</span>
<span style="left:90px;top:142px;font-size:16.61px;line-height:22px;color:#a9b7c6;">  <i class="k">const</i> actionRef = <i class="f">useRef</i>&lt;ActionType&gt;()<i class="k">;</i></span>
<span style="left:6px;top:169px;font-size:16.61px;line-height:22px;color:#606366;">100</span>
<span style="left:90px;top:169px;font-size:16.61px;line-height:22px;color:#a9b7c6;">  <i class="k">return</i> (</span>
<span style="left:6px;top:197px;font-size:16.61px;line-height:22px;color:#606366;">101</span>
<span style="left:90px;top:197px;font-size:16.61px;line-height:22px;color:#a9b7c6;">    <i class="t">&lt;ProTable</i>&lt;API.CurrentUser&gt;</span>
<span style="left:6px;top:224px;font-size:16.61px;line-height:22px;color:#606366;">102</span>
<span style="left:90px;top:224px;font-size:16.61px;line-height:22px;color:#a9b7c6;">      <i class="at">columns</i><i class="eq">=</i>{columns}</span>
<span style="left:6px;top:252px;font-size:16.61px;line-height:22px;color:#606366;">103</span>
<span style="left:90px;top:252px;font-size:16.61px;line-height:22px;color:#a9b7c6;">      <i class="at">actionRef</i><i class="eq">=</i>{actionRef}</span>
<span style="left:6px;top:279px;font-size:16.61px;line-height:22px;color:#606366;">104</span>
<span style="left:90px;top:279px;font-size:16.61px;line-height:22px;color:#a9b7c6;">      <i class="at">cardBordered</i></span>
<span style="left:6px;top:307px;font-size:16.61px;line-height:22px;color:#606366;">105</span>
<span style="left:6px;top:334px;font-size:16.61px;line-height:22px;color:#606366;">106</span>
<span style="left:90px;top:334px;font-size:16.61px;line-height:22px;color:#a9b7c6;">        <i class="ci">console</i>.<i class="f">log</i>(sort<i class="k">,</i> filter)<i class="k">;</i></span>
<span style="left:6px;top:362px;font-size:16.61px;line-height:22px;color:#a4a3a3;">107</span>
<span style="left:90px;top:362px;font-size:16.61px;line-height:22px;color:#a9b7c6;">        <i class="k">const</i> userList = <i class="k">await</i> <i class="f">searchUsers</i>()<i class="k">;</i></span>
<span style="left:6px;top:389px;font-size:16.61px;line-height:22px;color:#606366;">108</span>
<span style="left:90px;top:389px;font-size:16.61px;line-height:22px;color:#a9b7c6;">        <i class="k">return</i> {</span>
<span style="left:6px;top:417px;font-size:16.61px;line-height:22px;color:#606366;">109</span>
<span style="left:90px;top:417px;font-size:16.61px;line-height:22px;color:#a9b7c6;">          data<i>:</i> userList</span>
<span style="left:6px;top:444px;font-size:16.61px;line-height:22px;color:#606366;">110</span>
<span style="left:90px;top:444px;font-size:16.61px;line-height:22px;color:#a9b7c6;">        }</span>
<span style="left:6px;top:472px;font-size:16.61px;line-height:22px;color:#606366;">111</span>
<span style="left:90px;top:472px;font-size:16.61px;line-height:22px;color:#a9b7c6;">      }}</span>
<span style="left:6px;top:499px;font-size:16.61px;line-height:22px;color:#606366;">112</span>
<span style="left:90px;top:499px;font-size:16.61px;line-height:22px;color:#a9b7c6;">      <i class="at">editable</i><i class="eq">=</i>{{</span>
<span style="left:6px;top:527px;font-size:16.61px;line-height:22px;color:#606366;">113</span>
<span style="left:90px;top:527px;font-size:16.61px;line-height:22px;color:#a9b7c6;">        <i class="p">type</i>: <i class="s">'multiple'</i><i class="k">,</i></span>
<span style="left:6px;top:554px;font-size:16.61px;line-height:22px;color:#606366;">114</span>
<span style="left:90px;top:554px;font-size:16.61px;line-height:22px;color:#a9b7c6;">      }}</span>
<span style="left:6px;top:582px;font-size:16.61px;line-height:22px;color:#606366;">115</span>
<span style="left:90px;top:582px;font-size:16.61px;line-height:22px;color:#a9b7c6;">      <i class="at">columnsState</i><i class="eq">=</i>{{</span>
<span style="left:6px;top:609px;font-size:16.61px;line-height:22px;color:#606366;">116</span>
<span style="left:90px;top:609px;font-size:16.61px;line-height:22px;color:#a9b7c6;">        <i class="p">persistenceKey</i>: <i class="s">'pro-table-singe-demos'</i><i class="k">,</i></span>
<span style="left:6px;top:637px;font-size:16.61px;line-height:22px;color:#606366;">117</span>
<span style="left:90px;top:637px;font-size:16.61px;line-height:22px;color:#a9b7c6;">        <i class="p">persistenceType</i>: <i class="s">'localStorage'</i><i class="k">,</i></span>
<span style="left:6px;top:664px;font-size:16.61px;line-height:22px;color:#606366;">118</span>
<span style="left:90px;top:664px;font-size:16.61px;line-height:22px;color:#a9b7c6;">      }}</span>
<span style="left:6px;top:692px;font-size:16.61px;line-height:22px;color:#606366;">119</span>
<span style="left:90px;top:692px;font-size:16.61px;line-height:22px;color:#a9b7c6;">      <i class="at">rowKey</i><i class="eq">=</i><i class="s">"id"</i></span>
<span style="left:6px;top:719px;font-size:16.61px;line-height:22px;color:#606366;">120</span>
<span style="left:90px;top:719px;font-size:16.61px;line-height:22px;color:#a9b7c6;">      <i class="at">search</i><i class="eq">=</i>{{</span>
<span style="left:6px;top:747px;font-size:16.61px;line-height:22px;color:#606366;">121</span>
<span style="left:90px;top:747px;font-size:16.61px;line-height:22px;color:#a9b7c6;">        <i class="p">labelWidth</i>: <i class="s">'auto'</i><i class="k">,</i></span>
<span style="left:6px;top:774px;font-size:16.61px;line-height:22px;color:#606366;">122</span>
<span style="left:90px;top:774px;font-size:16.61px;line-height:22px;color:#a9b7c6;">      }}</span>
<span style="left:6px;top:802px;font-size:16.61px;line-height:22px;color:#606366;">123</span>
<span style="left:90px;top:802px;font-size:16.61px;line-height:22px;color:#a9b7c6;">      <i class="at">form</i><i class="eq">=</i>{{</span>
<span style="left:6px;top:829px;font-size:16.61px;line-height:22px;color:#606366;">124</span>
<span style="left:90px;top:829px;font-size:16.61px;line-height:22px;color:#a9b7c6;">        <i class="c">// <i class="z">由于配置了</i> transform<i class="z">，提交的参与与定义的不同这里需要转化一下</i></i></span>
<span style="left:150px;top:307px;font-size:16.61px;line-height:22px;color:#a9b7c6;"><i class="at">request</i><i class="eq">=</i>{<i class="k">async</i> (params</span>
<svg class="a" style="left:150px;top:324.0px" width="71" height="4" viewBox="0 0 71 4"><polyline points="0.0,0.6 2.7,3.2 5.4,0.6 8.1,3.2 10.8,0.6 13.5,3.2 16.2,0.6 18.9,3.2 21.6,0.6 24.3,3.2 27.0,0.6 29.7,3.2 32.4,0.6 35.1,3.2 37.8,0.6 40.5,3.2 43.2,0.6 45.9,3.2 48.6,0.6 51.3,3.2 54.0,0.6 56.7,3.2 59.4,0.6 62.1,3.2 64.8,0.6 67.5,3.2" fill="none" stroke="#bc3f3c" stroke-width="1.25"/></svg>
<div style="left:372px;top:308px;width:51px;height:18.5px;background:#343435;border-radius:4.5px"></div>
<span style="left:380px;top:308px;font-size:14.95px;line-height:19px;color:#787878;transform:scaleY(1.09);transform-origin:0 14px;">: {}</span>
<span style="left:424px;top:307px;font-size:16.61px;line-height:22px;color:#a9b7c6;"> = {}<i class="k">,</i> sort</span>
<div style="left:535px;top:308px;width:259px;height:18.5px;background:#343435;border-radius:4.5px"></div>
<span style="left:543px;top:308px;font-size:14.95px;line-height:19px;color:#787878;transform:scaleY(1.09);transform-origin:0 14px;">: Record&lt;string, SortOrder&gt;</span>
<span style="left:794px;top:307px;font-size:16.61px;line-height:22px;color:#a9b7c6;"><i class="k">,</i> filter</span>
<div style="left:875px;top:308px;width:62px;height:18.5px;background:#343435;border-radius:4.5px"></div>
<span style="left:883px;top:308px;font-size:14.95px;line-height:19px;color:#787878;transform:scaleY(1.09);transform-origin:0 14px;">: ...</span>
<span style="left:938px;top:307px;font-size:16.61px;line-height:22px;color:#a9b7c6;">) =&gt;</span>
<svg class="a" style="left:77px;top:5.0px" width="12" height="16" viewBox="0 0 12 16"><path d="M1.3 14.9H11.7V5.4L6.5 1.1L1.3 5.4Z" fill="#2b2b2b" stroke="#5e5e5e" stroke-width="1"/><path d="M3.5 10.5H9.5" stroke="#5e5e5e" stroke-width="1"/></svg>
<svg class="a" style="left:77px;top:33.0px" width="12" height="16" viewBox="0 0 12 16"><path d="M1.3 14.9H11.7V5.4L6.5 1.1L1.3 5.4Z" fill="#2b2b2b" stroke="#5e5e5e" stroke-width="1"/><path d="M3.5 10.5H9.5" stroke="#5e5e5e" stroke-width="1"/></svg>
<svg class="a" style="left:77px;top:60.0px" width="12" height="16" viewBox="0 0 12 16"><path d="M1.3 14.9H11.7V5.4L6.5 1.1L1.3 5.4Z" fill="#2b2b2b" stroke="#5e5e5e" stroke-width="1"/><path d="M3.5 10.5H9.5" stroke="#5e5e5e" stroke-width="1"/></svg>
<svg class="a" style="left:77px;top:118.0px" width="12" height="16" viewBox="0 0 12 16"><path d="M1.3 1.3H11.7V9.6L6.5 15.4L1.3 9.6Z" fill="#2b2b2b" stroke="#5e5e5e" stroke-width="1"/><path d="M3.5 6.5H9.5" stroke="#5e5e5e" stroke-width="1"/></svg>
<svg class="a" style="left:77px;top:311.0px" width="12" height="16" viewBox="0 0 12 16"><path d="M1.3 1.3H11.7V9.6L6.5 15.4L1.3 9.6Z" fill="#2b2b2b" stroke="#5e5e5e" stroke-width="1"/><path d="M3.5 6.5H9.5" stroke="#5e5e5e" stroke-width="1"/></svg>
<svg class="a" style="left:77px;top:393.0px" width="12" height="16" viewBox="0 0 12 16"><path d="M1.3 1.3H11.7V9.6L6.5 15.4L1.3 9.6Z" fill="#2b2b2b" stroke="#5e5e5e" stroke-width="1"/><path d="M3.5 6.5H9.5" stroke="#5e5e5e" stroke-width="1"/></svg>
<svg class="a" style="left:77px;top:445.0px" width="12" height="16" viewBox="0 0 12 16"><path d="M1.3 14.9H11.7V5.4L6.5 1.1L1.3 5.4Z" fill="#2b2b2b" stroke="#5e5e5e" stroke-width="1"/><path d="M3.5 10.5H9.5" stroke="#5e5e5e" stroke-width="1"/></svg>
<svg class="a" style="left:77px;top:473.0px" width="12" height="16" viewBox="0 0 12 16"><path d="M1.3 14.9H11.7V5.4L6.5 1.1L1.3 5.4Z" fill="#2b2b2b" stroke="#5e5e5e" stroke-width="1"/><path d="M3.5 10.5H9.5" stroke="#5e5e5e" stroke-width="1"/></svg>
<svg class="a" style="left:77px;top:503.0px" width="12" height="16" viewBox="0 0 12 16"><path d="M1.3 1.3H11.7V9.6L6.5 15.4L1.3 9.6Z" fill="#2b2b2b" stroke="#5e5e5e" stroke-width="1"/><path d="M3.5 6.5H9.5" stroke="#5e5e5e" stroke-width="1"/></svg>
<svg class="a" style="left:77px;top:555.0px" width="12" height="16" viewBox="0 0 12 16"><path d="M1.3 14.9H11.7V5.4L6.5 1.1L1.3 5.4Z" fill="#2b2b2b" stroke="#5e5e5e" stroke-width="1"/><path d="M3.5 10.5H9.5" stroke="#5e5e5e" stroke-width="1"/></svg>
<svg class="a" style="left:77px;top:586.0px" width="12" height="16" viewBox="0 0 12 16"><path d="M1.3 1.3H11.7V9.6L6.5 15.4L1.3 9.6Z" fill="#2b2b2b" stroke="#5e5e5e" stroke-width="1"/><path d="M3.5 6.5H9.5" stroke="#5e5e5e" stroke-width="1"/></svg>
<svg class="a" style="left:77px;top:665.0px" width="12" height="16" viewBox="0 0 12 16"><path d="M1.3 14.9H11.7V5.4L6.5 1.1L1.3 5.4Z" fill="#2b2b2b" stroke="#5e5e5e" stroke-width="1"/><path d="M3.5 10.5H9.5" stroke="#5e5e5e" stroke-width="1"/></svg>
<svg class="a" style="left:77px;top:723.0px" width="12" height="16" viewBox="0 0 12 16"><path d="M1.3 1.3H11.7V9.6L6.5 15.4L1.3 9.6Z" fill="#2b2b2b" stroke="#5e5e5e" stroke-width="1"/><path d="M3.5 6.5H9.5" stroke="#5e5e5e" stroke-width="1"/></svg>
<svg class="a" style="left:77px;top:775.0px" width="12" height="16" viewBox="0 0 12 16"><path d="M1.3 14.9H11.7V5.4L6.5 1.1L1.3 5.4Z" fill="#2b2b2b" stroke="#5e5e5e" stroke-width="1"/><path d="M3.5 10.5H9.5" stroke="#5e5e5e" stroke-width="1"/></svg>
<svg class="a" style="left:77px;top:806.0px" width="12" height="16" viewBox="0 0 12 16"><path d="M1.3 1.3H11.7V9.6L6.5 15.4L1.3 9.6Z" fill="#2b2b2b" stroke="#5e5e5e" stroke-width="1"/><path d="M3.5 6.5H9.5" stroke="#5e5e5e" stroke-width="1"/></svg>
<svg class="a" style="left:46px;top:527.5px" width="20" height="18" viewBox="0 0 20 18"><circle cx="7" cy="9" r="5.8" fill="#3d9fc6"/><circle cx="7" cy="9" r="3.2" fill="#313335"/><circle cx="7" cy="9" r="1.6" fill="#3d9fc6"/><path d="M14.6 17.5V2" stroke="#db5c5c" stroke-width="1.4"/><path d="M11.6 5.2L14.6 1.2L17.6 5.2" fill="none" stroke="#db5c5c" stroke-width="1.4"/></svg>
<svg class="a" style="left:46px;top:609.5px" width="20" height="18" viewBox="0 0 20 18"><circle cx="7" cy="9" r="5.8" fill="#3d9fc6"/><circle cx="7" cy="9" r="3.2" fill="#313335"/><circle cx="7" cy="9" r="1.6" fill="#3d9fc6"/><path d="M14.6 17.5V2" stroke="#db5c5c" stroke-width="1.4"/><path d="M11.6 5.2L14.6 1.2L17.6 5.2" fill="none" stroke="#db5c5c" stroke-width="1.4"/></svg>
<svg class="a" style="left:46px;top:637.5px" width="20" height="18" viewBox="0 0 20 18"><circle cx="7" cy="9" r="5.8" fill="#3d9fc6"/><circle cx="7" cy="9" r="3.2" fill="#313335"/><circle cx="7" cy="9" r="1.6" fill="#3d9fc6"/><path d="M14.6 17.5V2" stroke="#db5c5c" stroke-width="1.4"/><path d="M11.6 5.2L14.6 1.2L17.6 5.2" fill="none" stroke="#db5c5c" stroke-width="1.4"/></svg>
<svg class="a" style="left:133px;top:349px" width="490" height="124" viewBox="0 0 490 124"><rect x="5.5" y="5.5" width="478" height="112" rx="3.9" fill="none" stroke="#fd1f13" stroke-width="4.55"/></svg>
</div>
<div style="left:507px;top:904px;width:964px;height:31px;background:#313335"></div>
<span style="left:521px;top:911px;font-size:14.95px;line-height:19px;color:#bbbbbb;transform:scaleY(1.09);transform-origin:0 14px;">&lt;anonymous&gt;()</span>
<span style="left:668px;top:911px;font-size:14.95px;line-height:19px;color:#bbbbbb;transform:scaleY(1.09);transform-origin:0 14px;">ProTable</span>
<span style="left:770.5px;top:911px;font-size:14.95px;line-height:19px;color:#bbbbbb;transform:scaleY(1.09);transform-origin:0 14px;">&lt;anonymous&gt;()</span>
<span style="left:918px;top:911px;font-size:14.95px;line-height:19px;color:#bbbbbb;transform:scaleY(1.09);transform-origin:0 14px;">userList</span>
<svg class="a" style="left:652px;top:916px" width="5" height="8" viewBox="0 0 5 8"><path d="M0.8 0.8L4 4L0.8 7.2" fill="none" stroke="#6e6e6e" stroke-width="1.1"/></svg>
<svg class="a" style="left:754px;top:916px" width="5" height="8" viewBox="0 0 5 8"><path d="M0.8 0.8L4 4L0.8 7.2" fill="none" stroke="#6e6e6e" stroke-width="1.1"/></svg>
<svg class="a" style="left:902px;top:916px" width="5" height="8" viewBox="0 0 5 8"><path d="M0.8 0.8L4 4L0.8 7.2" fill="none" stroke="#6e6e6e" stroke-width="1.1"/></svg>
<div style="left:0;top:935px;width:1471px;height:25px;background:#3c3f41"></div>
<div style="left:0;top:934px;width:1471px;height:1px;background:#323232"></div>
<span style="left:65.5px;top:941px;font-size:13.29px;line-height:17px;color:#bbbbbb;transform:scaleY(1.08);transform-origin:0 13px;">Version Control</span>
<span style="left:233.5px;top:941px;font-size:13.29px;line-height:17px;color:#bbbbbb;transform:scaleY(1.08);transform-origin:0 13px;">Run</span>
<span style="left:303px;top:941px;font-size:13.29px;line-height:17px;color:#bbbbbb;transform:scaleY(1.08);transform-origin:0 13px;">TODO</span>
<span style="left:380.5px;top:941px;font-size:13.29px;line-height:17px;color:#bbbbbb;transform:scaleY(1.08);transform-origin:0 13px;">Problems</span>
<span style="left:492px;top:941px;font-size:13.29px;line-height:17px;color:#bbbbbb;transform:scaleY(1.08);transform-origin:0 13px;">Terminal</span>
<span style="left:603px;top:941px;font-size:13.29px;line-height:17px;color:#bbbbbb;transform:scaleY(1.08);transform-origin:0 13px;">Services</span>
<svg class="a" style="left:46px;top:942px" width="13" height="16" viewBox="0 0 13 16"><circle cx="2.9" cy="2.3" r="2.05" fill="#bdbfc1"/><circle cx="2.9" cy="13.2" r="2.05" fill="#bdbfc1"/><circle cx="9.2" cy="4.5" r="2.05" fill="#bdbfc1"/><path d="M2.9 2.3V13.2" fill="none" stroke="#bdbfc1" stroke-width="2.3"/><path d="M9.2 4.5V6.6C9.2 9.6 7 10.3 3.2 10.6" fill="none" stroke="#bdbfc1" stroke-width="1.9"/></svg>
<svg class="a" style="left:213px;top:942px" width="16" height="16" viewBox="0 0 16 16"><path d="M0.6 0.9L10.8 7.5L0.6 14.2Z" fill="#afb1b3"/><circle cx="11.9" cy="13.2" r="3.1" fill="#3c3f41"/><circle cx="11.9" cy="13.2" r="2.55" fill="#0ce20c"/></svg>
<svg class="a" style="left:282px;top:943px" width="14" height="12" viewBox="0 0 14 12"><path d="M0.4 1.9H2.6M0.4 6.1H2.6M0.4 10.3H2.6" stroke="#afb1b3" stroke-width="2.5"/><path d="M4.1 1.9H13.2M4.1 6.1H13.2M4.1 10.3H13.2" stroke="#afb1b3" stroke-width="2.5"/></svg>
<svg class="a" style="left:360px;top:942px" width="14" height="14" viewBox="0 0 14 14"><circle cx="7" cy="7" r="6.5" fill="#c75450"/><rect x="5.8" y="2.7" width="2.4" height="5.6" fill="#3c3f41"/><rect x="5.8" y="9.4" width="2.4" height="2.2" fill="#3c3f41"/></svg>
<svg class="a" style="left:471px;top:942px" width="14" height="14" viewBox="0 0 14 14"><rect y="0.3" width="14" height="13.1" fill="#afb1b3"/><path d="M2.4 3.6L5.6 6.4L2.4 9.2" fill="none" stroke="#3c3f41" stroke-width="1.3"/><path d="M6.8 10.4H11.4" stroke="#3c3f41" stroke-width="1.4"/></svg>
<svg class="a" style="left:581px;top:942px" width="15" height="15" viewBox="0 0 15 15"><path d="M4.4 0.3H10.6L14.7 7.5L10.6 14.7H4.4L0.3 7.5Z" fill="#afb1b3"/><path d="M5.4 4L10.6 7.5L5.4 11Z" fill="#3c3f41"/></svg>
</body></html>
